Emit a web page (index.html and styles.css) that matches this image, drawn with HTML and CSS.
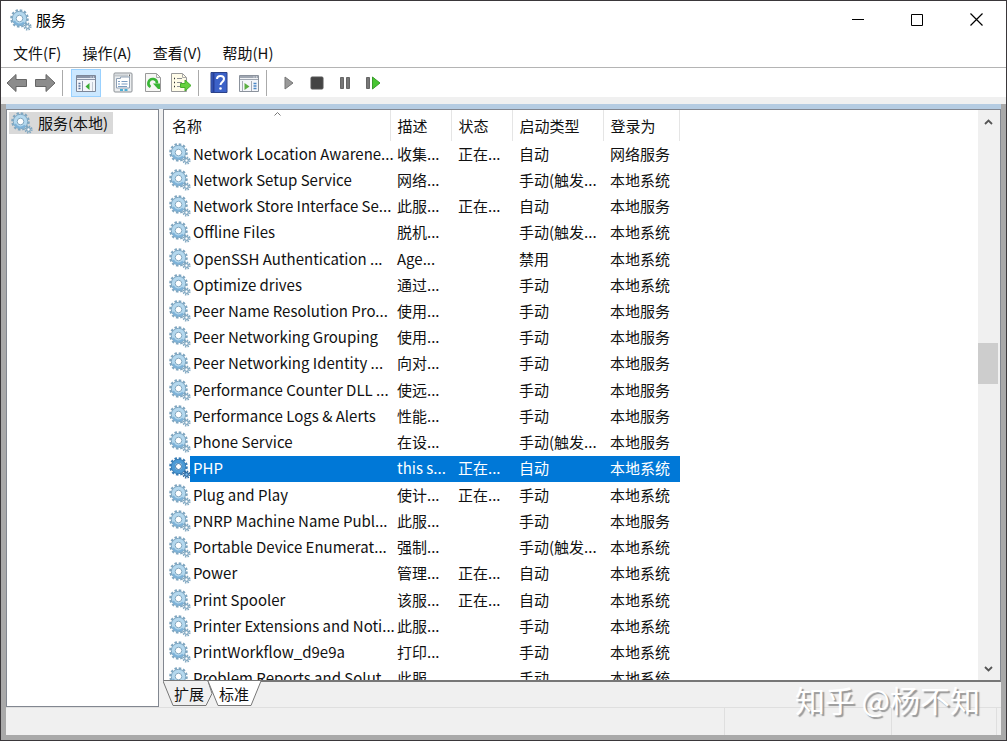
FILE: index.html
```html
<!DOCTYPE html>
<html lang="zh-CN">
<head>
    <meta charset="UTF-8">
    <meta name="viewport" content="width=device-width, initial-scale=1.0">
    <title>服务</title>
    <link rel="stylesheet" href="styles.css">
</head>
<body>
    <svg class="sprite" aria-hidden="true">
        <symbol id="gear" viewBox="0 0 22 22">
            <circle cx="9.5" cy="9.5" r="8" fill="none" stroke="currentColor" stroke-width="2.6" stroke-dasharray="2.4 1.79"/>
            <circle cx="9.5" cy="9.5" r="5.4" fill="none" stroke="#b4d8ee" stroke-width="4"/>
            <circle cx="9.5" cy="9.5" r="7.2" fill="none" stroke="currentColor" stroke-width="1"/>
            <path d="M4 12a6 6 0 0 0 10 1.500" fill="none" stroke="#7db2d8" stroke-width="2"/>
            <circle cx="9.5" cy="9.5" r="3.3" fill="#fff" stroke="currentColor" stroke-width="1"/>
            <circle cx="17.5" cy="17.5" r="3" fill="none" stroke="currentColor" stroke-width="2.2" stroke-dasharray="1.3 1.05"/>
            <circle cx="17.5" cy="17.5" r="1.800" fill="#fff" stroke="currentColor" stroke-width="1.2"/>
        </symbol>
        <symbol id="gear-selected" viewBox="0 0 22 22">
            <circle cx="9.5" cy="9.5" r="8" fill="none" stroke="#3a7db5" stroke-width="2.6" stroke-dasharray="2.4 1.79"/>
            <circle cx="9.5" cy="9.5" r="5.4" fill="none" stroke="#4d9bd6" stroke-width="4"/>
            <circle cx="9.5" cy="9.5" r="7.2" fill="none" stroke="#3a7db5" stroke-width="1"/>
            <circle cx="9.5" cy="9.5" r="3" fill="#fff" stroke="#2b69a0" stroke-width="1"/>
            <circle cx="17.5" cy="17.5" r="3" fill="none" stroke="#2b69a0" stroke-width="2.2" stroke-dasharray="1.3 1.05"/>
            <circle cx="17.5" cy="17.5" r="1.800" fill="#7fbdf0" stroke="#2b69a0" stroke-width="1.2"/>
        </symbol>
    </svg>

    <div class="window">
        <header class="titlebar">
            <svg class="gear"><use href="#gear"/></svg>
            <h1 class="title">服务</h1>
            <button class="win-btn" aria-label="最小化"><svg width="13" height="13"><path d="M0 6.5h12" stroke="#000"/></svg></button>
            <button class="win-btn" aria-label="最大化"><svg width="13" height="13"><path d="M.5 1.5h11v11H.5z" fill="none" stroke="#000"/></svg></button>
            <button class="win-btn" aria-label="关闭"><svg width="13" height="13"><path d="M.5 .5l12 12M12.5 .5l-12 12" stroke="#000" stroke-width="1.2"/></svg></button>
        </header>

        <nav class="menubar">
            <button>文件(F)</button>
            <button>操作(A)</button>
            <button>查看(V)</button>
            <button>帮助(H)</button>
        </nav>

        <div class="toolbar">
            <button class="tool" aria-label="后退"><svg width="22" height="20" viewBox="0 0 22 20"><path d="M1 10l9-8.500v5h10.500v7H10v5z" fill="#8c8c8c" stroke="#666"/></svg></button>
            <button class="tool" aria-label="前进"><svg width="22" height="20" viewBox="0 0 22 20"><path d="M21 10l-9-8.500v5H1.500v7H12v5z" fill="#8c8c8c" stroke="#666"/></svg></button>
            <span class="sep"></span>
            <button class="tool active" aria-label="显示/隐藏控制台树">
                <svg width="22" height="20" viewBox="0 0 22 20">
                    <path d="M1.500 2.500h19v16h-19z" fill="#f4f6fa" stroke="#7d8799"/>
                    <path d="M2 3h18v4H2z" fill="#8994a8"/>
                    <path d="M2 5.500h18M15.500 4h1M18 4h1" stroke="#e8edf5"/>
                    <path d="M7.500 8v10" stroke="#8994a8"/>
                    <path d="M3.500 10.500h2M3.500 13h2M3.500 15.500h2" stroke="#58719b" stroke-width="1.300"/>
                    <path d="M14.500 10v7l-4-3.500z" fill="#38ad32"/>
                    <path d="M17.500 9v9" stroke="#c2c8d2"/>
                </svg>
            </button>
            <button class="tool props" aria-label="属性">
                <svg width="20" height="21" viewBox="0 0 20 21">
                    <rect x="1" y="1" width="18" height="19" rx="1" fill="#eceef0" stroke="#8b9095"/>
                    <path d="M2 3.500h13" stroke="#c3c8cc" stroke-width="2"/><path d="M16.500 2.500v2" stroke="#666"/>
                    <path d="M3.500 6.500h4v-1.500h9v11h-13z" fill="#fff" stroke="#8fa0b4"/>
                    <path d="M5 9.500h2M8.500 9.500h6M5 12h2M8.500 12h6M5 14.500h9" stroke="#7a9cc2"/>
                    <path d="M7 18h3M11.500 18h3" stroke="#4baed6" stroke-width="2"/>
                </svg>
            </button>
            <button class="tool" aria-label="刷新">
                <svg width="18" height="21" viewBox="0 0 18 21">
                    <path d="M1.500 1.500h11l4 4v14h-15z" fill="#f7f7f5" stroke="#999"/><path d="M12.500 1.500v4h4" fill="none" stroke="#aaa"/>
                    <path d="M6.500 15A4.300 4.300 0 1 1 13 11.500" fill="none" stroke="#39b635" stroke-width="2.600"/>
                    <path d="M9 11.500h7v5.500h-2z" fill="#39b635"/>
                </svg>
            </button>
            <button class="tool" aria-label="导出列表">
                <svg width="22" height="21" viewBox="0 0 22 21">
                    <path d="M1.500 1.500h11l4 4v14h-15z" fill="#fffce9" stroke="#999"/><path d="M12.500 1.500v4h4" fill="none" stroke="#aaa"/>
                    <path d="M4 6.500h1M4 10.500h1M4 14.500h1" stroke="#333" stroke-width="1.500"/>
                    <path d="M7 6.500h5M7 10.500h5M7 14.500h5" stroke="#8a8d93"/>
                    <path d="M10.500 11.500h4.500V8l6 5.500-6 5.500v-3.500h-4.500z" fill="#65d13c" stroke="#44ad2a"/>
                </svg>
            </button>
            <span class="sep"></span>
            <button class="tool help" aria-label="帮助">
                <svg width="18" height="21" viewBox="0 0 18 21">
                    <path d="M1 .5h16v20H1z" fill="#3c62c8" stroke="#2a4189"/><path d="M3.500 1v19" stroke="#263f98" stroke-width="2"/>
                    <path d="M7 7c0-4 7-4 7 0 0 3-3.500 3-3.500 6" fill="none" stroke="#fff" stroke-width="2"/><circle cx="10.500" cy="16.500" r="1.300" fill="#fff"/>
                </svg>
            </button>
            <button class="tool" aria-label="显示/隐藏操作窗格">
                <svg width="22" height="20" viewBox="0 0 22 20">
                    <path d="M1.500 2.500h19v16h-19z" fill="#f4f6fa" stroke="#8b929c"/>
                    <path d="M2 3h18v4H2z" fill="#a0a7b2"/>
                    <path d="M2 5.500h18M15.500 4h1M18 4h1" stroke="#f0f2f5"/>
                    <path d="M13.500 8v10M4.500 8v10" stroke="#a5abb5"/>
                    <path d="M15.500 10.500h3M15.500 13h3M15.500 15.500h3" stroke="#4c88c7" stroke-width="1.300"/>
                    <path d="M6.500 10v7l5-3.500z" fill="#5bad42"/>
                </svg>
            </button>
            <span class="sep"></span>
            <button class="tool" aria-label="启动服务"><svg width="16" height="16"><path d="M4 2l8 6-8 6z" fill="#999" stroke="#777"/></svg></button>
            <button class="tool" aria-label="停止服务"><svg width="16" height="16"><rect x="2" y="2" width="12" height="12" rx="1" fill="#444" stroke="#555"/></svg></button>
            <button class="tool" aria-label="暂停服务"><svg width="16" height="16"><path d="M3.500 2.500h3v11h-3zM9.500 2.500h3v11h-3z" fill="#777" stroke="#666"/></svg></button>
            <button class="tool" aria-label="重启动服务"><svg width="16" height="16"><path d="M1.500 2.500h3v11h-3z" fill="#777" stroke="#666"/><path d="M7.500 2l7.500 6-7.500 6z" fill="#48c532" stroke="#3a9c2d"/></svg></button>
        </div>

        <div class="rebar"></div>

        <div class="frame">
            <main class="content">
                <aside class="tree">
                    <button class="tree-item"><svg class="gear"><use href="#gear"/></svg>服务(本地)</button>
                </aside>

                <section class="pane">
                    <div class="list">
                        <div class="list-view">
                            <table class="services">
                                <thead>
                                    <tr>
                                        <th class="col-name">名称<svg class="sort" width="7" height="4"><path d="M.5 3.500l3-3 3 3" fill="none" stroke="#777"/></svg></th>
                                        <th class="col-desc">描述</th>
                                        <th class="col-state">状态</th>
                                        <th class="col-start">启动类型</th>
                                        <th class="col-logon">登录为</th>
                                    </tr>
                                </thead>
                                <tbody>
                                    <tr><td><div class="name"><svg class="gear"><use href="#gear"/></svg><span>Network Location Awarene...</span></div></td><td>收集...</td><td>正在...</td><td>自动</td><td>网络服务</td></tr>
                                    <tr><td><div class="name"><svg class="gear"><use href="#gear"/></svg><span>Network Setup Service</span></div></td><td>网络...</td><td></td><td>手动(触发...</td><td>本地系统</td></tr>
                                    <tr><td><div class="name"><svg class="gear"><use href="#gear"/></svg><span>Network Store Interface Se...</span></div></td><td>此服...</td><td>正在...</td><td>自动</td><td>本地服务</td></tr>
                                    <tr><td><div class="name"><svg class="gear"><use href="#gear"/></svg><span>Offline Files</span></div></td><td>脱机...</td><td></td><td>手动(触发...</td><td>本地系统</td></tr>
                                    <tr><td><div class="name"><svg class="gear"><use href="#gear"/></svg><span>OpenSSH Authentication ...</span></div></td><td>Age...</td><td></td><td>禁用</td><td>本地系统</td></tr>
                                    <tr><td><div class="name"><svg class="gear"><use href="#gear"/></svg><span>Optimize drives</span></div></td><td>通过...</td><td></td><td>手动</td><td>本地系统</td></tr>
                                    <tr><td><div class="name"><svg class="gear"><use href="#gear"/></svg><span>Peer Name Resolution Pro...</span></div></td><td>使用...</td><td></td><td>手动</td><td>本地服务</td></tr>
                                    <tr><td><div class="name"><svg class="gear"><use href="#gear"/></svg><span>Peer Networking Grouping</span></div></td><td>使用...</td><td></td><td>手动</td><td>本地服务</td></tr>
                                    <tr><td><div class="name"><svg class="gear"><use href="#gear"/></svg><span>Peer Networking Identity ...</span></div></td><td>向对...</td><td></td><td>手动</td><td>本地服务</td></tr>
                                    <tr><td><div class="name"><svg class="gear"><use href="#gear"/></svg><span>Performance Counter DLL ...</span></div></td><td>使远...</td><td></td><td>手动</td><td>本地服务</td></tr>
                                    <tr><td><div class="name"><svg class="gear"><use href="#gear"/></svg><span>Performance Logs &amp; Alerts</span></div></td><td>性能...</td><td></td><td>手动</td><td>本地服务</td></tr>
                                    <tr><td><div class="name"><svg class="gear"><use href="#gear"/></svg><span>Phone Service</span></div></td><td>在设...</td><td></td><td>手动(触发...</td><td>本地服务</td></tr>
                                    <tr class="selected"><td><div class="name"><svg class="gear"><use href="#gear-selected"/></svg><span>PHP</span></div></td><td>this s...</td><td>正在...</td><td>自动</td><td>本地系统</td></tr>
                                    <tr><td><div class="name"><svg class="gear"><use href="#gear"/></svg><span>Plug and Play</span></div></td><td>使计...</td><td>正在...</td><td>手动</td><td>本地系统</td></tr>
                                    <tr><td><div class="name"><svg class="gear"><use href="#gear"/></svg><span>PNRP Machine Name Publ...</span></div></td><td>此服...</td><td></td><td>手动</td><td>本地服务</td></tr>
                                    <tr><td><div class="name"><svg class="gear"><use href="#gear"/></svg><span>Portable Device Enumerat...</span></div></td><td>强制...</td><td></td><td>手动(触发...</td><td>本地系统</td></tr>
                                    <tr><td><div class="name"><svg class="gear"><use href="#gear"/></svg><span>Power</span></div></td><td>管理...</td><td>正在...</td><td>自动</td><td>本地系统</td></tr>
                                    <tr><td><div class="name"><svg class="gear"><use href="#gear"/></svg><span>Print Spooler</span></div></td><td>该服...</td><td>正在...</td><td>自动</td><td>本地系统</td></tr>
                                    <tr><td><div class="name"><svg class="gear"><use href="#gear"/></svg><span>Printer Extensions and Noti...</span></div></td><td>此服...</td><td></td><td>手动</td><td>本地系统</td></tr>
                                    <tr><td><div class="name"><svg class="gear"><use href="#gear"/></svg><span>PrintWorkflow_d9e9a</span></div></td><td>打印...</td><td></td><td>手动</td><td>本地系统</td></tr>
                                    <tr><td><div class="name"><svg class="gear"><use href="#gear"/></svg><span>Problem Reports and Solut...</span></div></td><td>此服...</td><td></td><td>手动</td><td>本地系统</td></tr>
                                </tbody>
                            </table>
                        </div>
                        <div class="scrollbar">
                            <button aria-label="向上滚动"><svg width="9" height="6"><path d="M1 5l3.500-3.500L8 5" fill="none" stroke="#555" stroke-width="1.800"/></svg></button>
                            <div class="track"><div class="thumb"></div></div>
                            <button aria-label="向下滚动"><svg width="9" height="6"><path d="M1 1l3.500 3.500L8 1" fill="none" stroke="#555" stroke-width="1.800"/></svg></button>
                        </div>
                    </div>
                    <div class="tabs">
                        <svg class="tab-shapes" width="100" height="26">
                            <path d="M0 0l10 24.500h33l6-12L45 0" fill="#f0f0f0" stroke="#777"/>
                            <path d="M45 0l10 24.500h33L98 0" fill="#fff" stroke="#777"/>
                        </svg>
                        <button>扩展</button>
                        <button>标准</button>
                    </div>
                </section>
            </main>
            <footer class="statusbar"><span></span><span></span><span></span><span></span></footer>
        </div>
        <div class="watermark">知乎 @杨不知</div>
    </div>
</body>
</html>
```
FILE: styles.css
```css
* {
    margin: 0;
    padding: 0;
    box-sizing: border-box;
}

body {
    font-family: "Noto Sans CJK SC", sans-serif;
    font-size: 15px;
    line-height: 20px;
    color: #111;
    background: #fff;
}

button {
    font: inherit;
    color: inherit;
    background: none;
    border: none;
}

svg {
    display: block;
    flex: none;
}

.sprite {
    position: absolute;
    width: 0;
    height: 0;
}

.gear {
    width: 22px;
    height: 22px;
    color: #7fa6c0;
}

.window {
    position: relative;
    display: flex;
    flex-direction: column;
    height: 100vh;
    border: 1px solid #3a373a;
    overflow: hidden;
}

.titlebar {
    display: flex;
    align-items: center;
    height: 37px;
    padding-left: 9px;
}

.title {
    flex: 1;
    margin-left: 4px;
    font-size: 15px;
    font-weight: normal;
    color: #000;
}

.win-btn {
    display: flex;
    align-items: center;
    justify-content: center;
    width: 59px;
    height: 37px;
}

.menubar {
    display: flex;
    align-items: center;
    gap: 21px;
    height: 29px;
    padding-left: 12px;
}

.toolbar {
    display: flex;
    align-items: center;
    height: 30px;
    padding-left: 2px;
    border-top: 1px solid #b4b4b4;
}

.tool {
    display: flex;
    align-items: center;
    justify-content: center;
    width: 28px;
    height: 28px;
}

.tool.active {
    width: 30px;
    background: #cce8ff;
    border: 1px solid #99d1ff;
}

.tool.props {
    margin: 0 2px 0 8px;
}

.tool.help {
    width: 24px;
    margin-right: 4px;
}

.sep {
    width: 1px;
    height: 26px;
    margin: 0 8px 0 3px;
    background: #aaa;
}

.rebar {
    height: 7px;
    background: #f0f0f0;
}

/* everything below the toolbar, inside the grey window frame */
.frame {
    flex: 1;
    display: flex;
    flex-direction: column;
    min-height: 0;
    background: #f0f0f0;
    border: 5px solid #a9a9a9;
    border-top: none;
}

.content {
    flex: 1;
    display: flex;
    gap: 4px;
    min-height: 0;
    border-top: 5px solid #b5cce2;
}

.tree {
    width: 153px;
    padding: 2px;
    background: #fff;
    border: 1px solid #828790;
}

.tree-item {
    display: flex;
    align-items: center;
    gap: 5px;
    height: 22px;
    padding: 0 5px 0 2px;
    background: #d9d9d9;
}

.pane {
    flex: 1;
    display: flex;
    flex-direction: column;
    min-width: 0;
}

.list {
    flex: 1;
    display: flex;
    min-height: 0;
    background: #fff;
    border: 1px solid #828790;
    border-bottom: 2px solid #777;
}

.list-view {
    flex: 1;
    overflow: hidden;
}

.services {
    width: 516px;
    height: 582px;
    table-layout: fixed;
    border-collapse: collapse;
}

.services th {
    position: relative;
    height: 31px;
    padding-left: 7px;
    border-right: 1px solid #e5e5e5;
    font-weight: normal;
    text-align: left;
}

.services td {
    padding: 0 0 1px 7px;
    white-space: nowrap;
}

.services .col-name {
    width: 226px;
    padding-left: 8px;
}

.col-desc,
.col-state {
    width: 61px;
}

.col-start {
    width: 91px;
}

.sort {
    position: absolute;
    top: 2px;
    left: 110px;
}

.services td:first-child {
    height: 26px;
    padding-left: 5px;
}

.name {
    display: flex;
    align-items: center;
    height: 100%;
}

.name span {
    flex: 1;
    padding-left: 2px;
}

.selected td {
    color: #fff;
    background: #0078d7;
}

.selected td:first-child {
    background: linear-gradient(to right, #fff 26px, #0078d7 26px);
}

.scrollbar {
    display: flex;
    flex-direction: column;
    width: 22px;
    padding-right: 2px;
    background: #f0f0f0;
}

.scrollbar button {
    display: flex;
    align-items: center;
    justify-content: center;
    height: 23px;
}

.track {
    flex: 1;
}

.track::before {
    content: "";
    display: block;
    height: 40%;
}

.thumb {
    height: 41px;
    background: #cdcdcd;
}

.tabs {
    position: relative;
    display: flex;
    gap: 15px;
    height: 25px;
    padding-left: 11px;
}

.tabs button {
    position: relative;
    height: 24px;
}

.tab-shapes {
    position: absolute;
    top: -1px;
    left: 0;
}

.statusbar {
    display: flex;
    height: 28px;
    border-top: 1px solid #dfdfdf;
}

.statusbar span {
    width: 167px;
    border-right: 1px solid #dfdfdf;
}

.statusbar span:first-child {
    flex: 1;
}

.statusbar span:nth-child(3) {
    width: 105px;
}

.statusbar span:last-child {
    width: 4px;
    border: none;
}

.watermark {
    position: absolute;
    right: 26px;
    bottom: 21px;
    font-size: 30px;
    line-height: 40px;
    color: #fff;
    text-shadow: 2px 2px 1px #999;
}
```
